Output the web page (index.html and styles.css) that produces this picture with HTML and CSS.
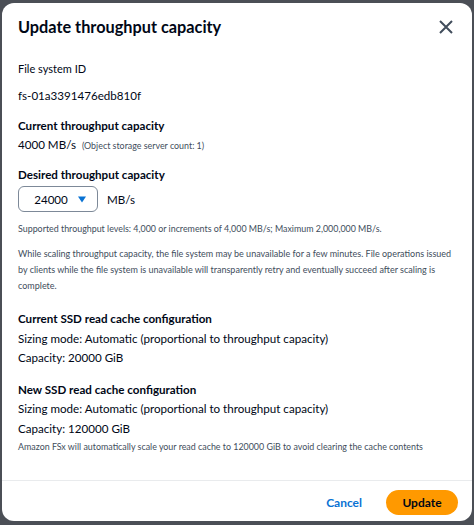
FILE: index.html
```html
<!DOCTYPE html>
<html lang="en">
<head>
    <meta charset="UTF-8">
    <meta name="viewport" content="width=device-width, initial-scale=1.0">
    <title>Update throughput capacity</title>
    <link rel="stylesheet" href="styles.css">
</head>
<body>
    <div class="modal">
        <div class="modal-header">
            <h1>Update throughput capacity</h1>
            <button class="close-btn" aria-label="Close">
                <svg width="16" height="16" viewBox="0 0 16 16"><path d="M2 2l12 12M14 2L2 14" stroke="#414d5c" stroke-width="2" fill="none"/></svg>
            </button>
        </div>

        <div class="modal-body">
            <div class="field">
                <div class="label-plain">File system ID</div>
                <div class="value id-value">fs-01a3391476edb810f</div>
            </div>

            <div class="field">
                <div class="label">Current throughput capacity</div>
                <div class="value">4000 MB/s <span class="note">(Object storage server count: 1)</span></div>
            </div>

            <div class="field">
                <div class="label">Desired throughput capacity</div>
                <div class="select-row">
                    <div class="select">
                        <span>24000</span>
                        <svg width="8" height="7" viewBox="0 0 8 7"><path d="M0 0.5h8L4 6.5z" fill="#0972d3"/></svg>
                    </div>
                    <span class="unit">MB/s</span>
                </div>
                <div class="hint">Supported throughput levels: 4,000 or increments of 4,000 MB/s; Maximum 2,000,000 MB/s.</div>
            </div>

            <p class="warning">While scaling throughput capacity, the file system may be unavailable for a few minutes. File operations issued by clients while the file system is unavailable will transparently retry and eventually succeed after scaling is complete.</p>

            <div class="cache">
                <div class="label">Current SSD read cache configuration</div>
                <div class="line">Sizing mode: Automatic (proportional to throughput capacity)</div>
                <div class="line">Capacity: 20000 GiB</div>
            </div>

            <div class="cache">
                <div class="label">New SSD read cache configuration</div>
                <div class="line">Sizing mode: Automatic (proportional to throughput capacity)</div>
                <div class="line">Capacity: 120000 GiB</div>
                <div class="hint">Amazon FSx will automatically scale your read cache to 120000 GiB to avoid clearing the cache contents</div>
            </div>
        </div>

        <div class="modal-footer">
            <button class="link-btn">Cancel</button>
            <button class="primary-btn">Update</button>
        </div>
    </div>
</body>
</html>
```

FILE: styles.css
```css
body { margin: 0; padding: 3px 2px 4px; background-color: #4b4f56; font-family: Lato, Arial, sans-serif; color: #000716; }
.modal { height: 518px; background-color: #fff; border-radius: 12px; display: flex; flex-direction: column; box-sizing: border-box; }
.modal-header { display: flex; justify-content: space-between; align-items: center; padding: 6px 16px 0 16px; height: 34px; }
.modal-header h1 { margin: 0; font-size: 16.3px; font-weight: 700; }
.close-btn { background: none; border: none; padding: 0; margin-right: 2px; margin-top: 2px; cursor: pointer; display: flex; }
.modal-body { flex-grow: 1; padding: 16px 16px 0 16px; }
.field { margin-bottom: 10px; }
.label-plain { font-size: 11px; line-height: 20px; margin-bottom: 7px; }
.id-value { font-size: 11.2px; line-height: 20px; }
.field .id-value { margin-bottom: 11px; }
.label { font-size: 11.6px; font-weight: 700; line-height: 19px; }
.value { font-size: 11.6px; line-height: 19px; }
.note { font-size: 8.9px; color: #414d5c; margin-left: 3px; }
.select-row { display: flex; align-items: center; margin-top: 2px; }
.select { width: 80px; height: 26px; box-sizing: border-box; border: 1px solid #7d8998; border-radius: 6px; display: flex; align-items: center; justify-content: center; gap: 10px; font-size: 11.6px; padding-left: 4px; }
.unit { font-size: 11.6px; margin-left: 9px; }
.hint { font-size: 8.9px; color: #414d5c; line-height: 14px; margin-top: 10px; }
.warning { font-size: 9px; color: #414d5c; line-height: 16px; margin: 1px 0 15px 0; }
.cache { margin-bottom: 12px; }
.cache .label { line-height: 19.5px; }
.line { font-size: 11.6px; line-height: 19.5px; }
.cache .hint { margin-top: 2px; }
.modal-footer { border-top: 1px solid #e9ebed; height: 41px; display: flex; justify-content: flex-end; align-items: center; padding: 3px 14px 0 16px; box-sizing: border-box; gap: 24px; }
.link-btn { background: none; border: none; color: #0972d3; font-family: inherit; font-size: 12px; font-weight: 700; cursor: pointer; padding: 0; }
.primary-btn { background-color: #ff9900; border: none; border-radius: 14px; width: 72px; height: 25px; font-family: inherit; font-size: 12px; font-weight: 700; color: #000716; cursor: pointer; }
```
